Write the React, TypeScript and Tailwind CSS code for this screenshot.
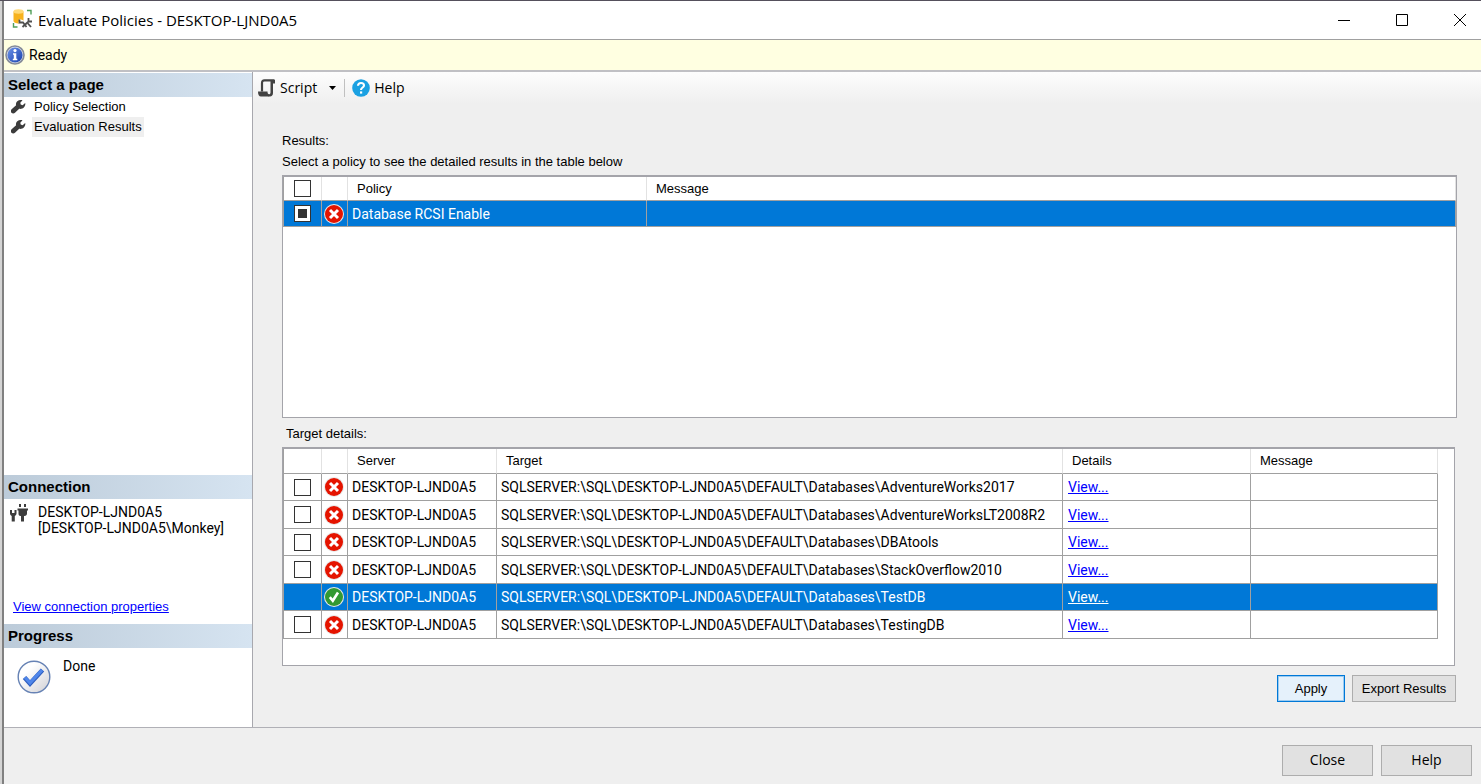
import { useState } from 'react'
import type { ReactNode } from 'react'

// ── Data ──────────────────────────────────────────────────────────────────────

interface TargetRow {
  database: string
  passed: boolean
}

const SERVER = 'DESKTOP-LJND0A5'

const targets: TargetRow[] = [
  { database: 'AdventureWorks2017', passed: false },
  { database: 'AdventureWorksLT2008R2', passed: false },
  { database: 'DBAtools', passed: false },
  { database: 'StackOverflow2010', passed: false },
  { database: 'TestDB', passed: true },
  { database: 'TestingDB', passed: false },
]

// ── Icons ─────────────────────────────────────────────────────────────────────

function AppIcon() {
  return (
    <svg width="22" height="22" viewBox="0 0 22 22" fill="none" aria-hidden="true">
      <path d="M15 1.500h4v4M1.500 14v4h4" stroke="#4f9e58" strokeWidth="1.400" />
      <path d="M1.500 2.500v9.500c0 1.600 2.400 2.500 5 2.500s5-.9 5-2.500V2.500z" fill="#f7b21d" />
      <ellipse cx="6.500" cy="2.500" rx="5" ry="2.200" fill="#ffd976" />
      <path d="M7 12l3 1 6 6M9.500 18.500l8-7.500" stroke="#fff" strokeWidth="4" />
      <path d="M7.500 10.500v3h3.500l3.500 4.500" stroke="#505050" strokeWidth="1.800" />
      <path d="M10.500 18l6-5.500h3.500M16.500 12.500V9" stroke="#505050" strokeWidth="1.800" />
      <path d="M15.500 14l3.500 4" stroke="#505050" strokeWidth="1.800" />
    </svg>
  )
}

function InfoIcon() {
  return (
    <svg width="20" height="20" viewBox="0 0 20 20" aria-hidden="true">
      <defs>
        <linearGradient id="info" x1="0" y1="0" x2="1" y2="1">
          <stop offset="0" stopColor="#6f95e8" />
          <stop offset="1" stopColor="#173fae" />
        </linearGradient>
      </defs>
      <circle cx="10" cy="10" r="9" fill="#dfe3ea" stroke="#858b99" strokeWidth="1.600" />
      <circle cx="10" cy="10" r="7.600" fill="url(#info)" />
      <circle cx="10" cy="5.600" r="1.600" fill="#fff" />
      <path d="M8 8.300h3.300v5.500h1v1.400H7.800v-1.400h1V9.700H8z" fill="#fff" />
    </svg>
  )
}

function WrenchIcon() {
  return (
    <svg width="15" height="14" viewBox="0 0 15 14" aria-hidden="true">
      <path
        d="M14.200 3L11.600 5.300 9.700 4.600 9.300 2.800 11.500.3C9.600-.4 7.500 0 6 1.400 5 2.600 4.700 4 5.100 5.300L.6 9.200c-1 .9-1 2.500-.1 3.600s2.600 1 3.500 0L8.200 8.800c1.600.4 3.300 0 4.600-1.300 1.200-1.200 1.800-2.900 1.400-4.500z"
        fill="#3c3c3c"
      />
    </svg>
  )
}

function ScriptIcon() {
  return (
    <svg width="18" height="18" viewBox="0 0 18 18" fill="none" aria-hidden="true">
      <path d="M4 12.500V4C4 2.300 4.800 1.300 6.500 1.300h10" stroke="#424242" strokeWidth="2.200" />
      <path d="M12.500 1h4.500v3.500h-2V14c0 2-1.200 3.500-3 3.500h-1.500v-2c1.300 0 2-.7 2-2z" fill="#424242" />
      <path d="M0 12.500h9.500c0 1.700.5 2.700 1.500 2.700v2.300H3C1 17.500 0 16 0 12.500z" fill="#424242" />
    </svg>
  )
}

function HelpIcon() {
  return (
    <svg width="18" height="18" viewBox="0 0 18 18" fill="none" aria-hidden="true">
      <circle cx="9" cy="9" r="8.800" fill="#1ba1e2" />
      <path d="M6 6.800C6 5 7.200 4 9 4s3 1 3 2.500C12 8.500 9 8.500 9 11" stroke="#fff" strokeWidth="2.100" />
      <rect x="8" y="12.400" width="2.200" height="2.200" fill="#fff" />
    </svg>
  )
}

function PlugIcon() {
  return (
    <svg width="18" height="18" viewBox="0 0 18 18" aria-hidden="true">
      <path
        d="M0 6h2v3h2.500V6h2v3.500c0 1.300-.8 2-1.700 2.500v5.500H1.700V12C.8 11.500 0 10.800 0 9.500z"
        fill="#3c3c3c"
      />
      <path d="M9 0h2v3H9zM14 0h2v3h-2zM7.500 4.500H18v2h-1v3c0 1.500-1 2.500-2.500 2.500H14v5.500h-3V12h-.5C9 12 8.500 11 8.500 9.500v-3h-1z" fill="#3c3c3c" />
    </svg>
  )
}

function DoneIcon() {
  return (
    <svg width="34" height="34" viewBox="0 0 34 34" fill="none" aria-hidden="true">
      <defs>
        <linearGradient id="done" x1="0" y1="0" x2="1" y2="1">
          <stop offset=".3" stopColor="#fff" />
          <stop offset="1" stopColor="#cfcfd4" />
        </linearGradient>
      </defs>
      <circle cx="17" cy="17" r="15.800" fill="url(#done)" stroke="#6682b4" strokeWidth="1.400" />
      <path d="M7.500 17.500l5.500 6L25.500 10" stroke="#2f5fc0" strokeWidth="4.600" />
      <path d="M8 17.500l5 5.300L25 10" stroke="#4f86ea" strokeWidth="3.200" />
    </svg>
  )
}

function StatusIcon({ passed }: { passed: boolean }) {
  return (
    <svg
      className="block"
      width="20"
      height="20"
      viewBox="0 0 20 20"
      fill="none"
      role="img"
      aria-label={passed ? 'Passed' : 'Failed'}
    >
      <circle cx="10" cy="10" r="10" fill="#e8e8e8" />
      <circle cx="10" cy="10" r="9" fill={passed ? '#339933' : '#e51400'} />
      {passed ? (
        <path d="M5.800 10.200l3 3.600 5.200-8.300" stroke="#fff" strokeWidth="2.600" />
      ) : (
        <path d="M6 6l8 8M14 6l-8 8" stroke="#fff" strokeWidth="3" />
      )}
    </svg>
  )
}

// ── Shared pieces ─────────────────────────────────────────────────────────────

function PanelHeader({ children }: { children: ReactNode }) {
  return (
    <h2 className="flex h-6 shrink-0 items-center bg-linear-to-r from-[#bccbd9] to-[#d6e4f1] px-1 text-[15px] font-bold">
      {children}
    </h2>
  )
}

function Tick({ label, filled = false }: { label: string; filled?: boolean }) {
  return (
    <input
      type="checkbox"
      aria-label={label}
      defaultChecked={filled}
      className="mx-auto block size-[17px] appearance-none border border-[#333] bg-white checked:bg-[#333] checked:shadow-[inset_0_0_0_3px_white]"
    />
  )
}

const headCell = 'border-r border-b border-r-[#e2e2e2] border-b-[#a0a0a0] px-[9px] text-left font-normal'
const cell = "border-r border-b border-[#a0a0a0] px-1 font-['Roboto',sans-serif] text-sm whitespace-nowrap"
const iconCell = 'border-r border-b border-[#a0a0a0] pl-[2px]'

// ── Window ────────────────────────────────────────────────────────────────────

export default function App() {
  const [page, setPage] = useState('Evaluation Results')

  return (
    <div className="flex min-h-screen border-t border-t-[#55505c] bg-[#efefef] font-['Liberation_Sans',sans-serif] text-[13px] text-black">
      {/* Window edge */}
      <div className="w-1 shrink-0 border-r-2 border-[#808080] bg-[#d4d4d4]" />

      <div className="flex min-w-0 grow flex-col">
        {/* Title bar */}
        <header className="flex h-[39px] shrink-0 items-center border-b border-[#a0a0a0] bg-white pl-2 font-['Open_Sans',sans-serif]">
          <AppIcon />
          <h1 className="ml-1 grow text-[15px]">Evaluate Policies - {SERVER}</h1>
          <div className="-mr-2 flex h-full">
            <button type="button" aria-label="Minimize" className="flex w-[58px] items-center justify-center">
              <svg width="12" height="12" stroke="#000"><path d="M0 6.500h12" /></svg>
            </button>
            <button type="button" aria-label="Maximize" className="flex w-[58px] items-center justify-center">
              <svg width="12" height="12" fill="none" stroke="#000"><path d="M.5.500h11v11H.5z" /></svg>
            </button>
            <button type="button" aria-label="Close window" className="flex w-[58px] items-center justify-center">
              <svg width="12" height="12" stroke="#000"><path d="M0 0l12 12M12 0L0 12" /></svg>
            </button>
          </div>
        </header>

        {/* Status strip */}
        <div
          className="flex h-[32px] shrink-0 items-center gap-1 border-b-2 border-[#c0c0c4] bg-[#ffffe1] pl-px font-['Roboto',sans-serif] text-sm"
          role="status"
        >
          <InfoIcon />
          Ready
        </div>

        <div className="flex grow border-b border-[#b0b0b6]">
          {/* Sidebar */}
          <aside className="flex w-[249px] shrink-0 flex-col border-r border-[#a8a8ae] bg-white pt-px">
            <PanelHeader>Select a page</PanelHeader>
            <nav className="grow">
              {['Policy Selection', 'Evaluation Results'].map((name) => (
                <button
                  key={name}
                  type="button"
                  onClick={() => setPage(name)}
                  className="flex h-5 items-center gap-1.5 pl-[7px]"
                >
                  <WrenchIcon />
                  <span className={page === name ? 'bg-[#efefef] px-0.5 leading-5' : 'px-0.5 leading-5'}>{name}</span>
                </button>
              ))}
            </nav>

            <PanelHeader>Connection</PanelHeader>
            <div className="flex h-[125px] flex-col justify-between pt-[5px] pb-2">
              <div className="flex gap-2.5 pl-1.5 font-['Roboto',sans-serif] text-sm leading-4">
                <PlugIcon />
                <p>
                  {SERVER}
                  <br />
                  [{SERVER}\Monkey]
                </p>
              </div>
              <a href="#connection" className="ml-[9px] self-start text-[#0000ff] underline">
                View connection properties
              </a>
            </div>

            <PanelHeader>Progress</PanelHeader>
            <div className="flex h-[79px] gap-3 pt-2 pl-[13px]">
              <div className="pt-1">
                <DoneIcon />
              </div>
              <p className="font-['Roboto',sans-serif] text-sm">Done</p>
            </div>
          </aside>

          {/* Page content */}
          <main className="flex min-w-0 grow flex-col">
            <div className="flex h-8 shrink-0 items-center bg-linear-to-b from-[#fdfdfd] to-[#efefef] pl-[5px] font-['Open_Sans',sans-serif] text-sm">
              <button type="button" className="flex items-center gap-1">
                <ScriptIcon />
                Script
                <svg className="ml-2" width="8" height="4" aria-hidden="true"><path d="M0 0h7L3.500 4z" /></svg>
              </button>
              <span className="mx-[7px] h-[18px] w-px bg-[#c0c0c0]" />
              <button type="button" className="flex items-center gap-1">
                <HelpIcon />
                Help
              </button>
            </div>

            <div className="flex grow flex-col pt-[26px] pr-6 pl-[29px]">
              <h3 className="leading-[21px]">Results:</h3>
              <p className="leading-[21px]">Select a policy to see the detailed results in the table below</p>
              <div className="mt-[3px] min-h-[243px] grow border border-t-2 border-[#a4a4aa] bg-white">
                <table className="w-full table-fixed border-separate border-spacing-0 border-l border-[#a0a0a0]">
                  <colgroup>
                    <col className="w-[38px]" />
                    <col className="w-[26px]" />
                    <col className="w-[299px]" />
                    <col />
                  </colgroup>
                  <thead>
                    <tr className="h-6">
                      <th className="border-r border-b border-r-[#e2e2e2] border-b-[#a0a0a0]">
                        <Tick label="Select all policies" />
                      </th>
                      <th className={headCell} />
                      <th className={headCell}>Policy</th>
                      <th className={headCell}>Message</th>
                    </tr>
                  </thead>
                  <tbody>
                    <tr className="h-[26px] bg-[#0078d7] text-white">
                      <td className="border-r border-b border-[#a0a0a0]">
                        <Tick label="Database RCSI Enable" filled />
                      </td>
                      <td className={iconCell}>
                        <StatusIcon passed={false} />
                      </td>
                      <td className={cell}>Database RCSI Enable</td>
                      <td className={cell} />
                    </tr>
                  </tbody>
                </table>
              </div>

              <h3 className="mt-1.5 ml-1 leading-5">Target details:</h3>
              <div className="mt-[3px] mr-0.5 h-[219px] border border-t-2 border-[#a4a4aa] bg-white pr-4">
                <table className="w-full table-fixed border-separate border-spacing-0 border-l border-[#a0a0a0]">
                  <colgroup>
                    <col className="w-[38px]" />
                    <col className="w-[26px]" />
                    <col className="w-[149px]" />
                    <col />
                    <col className="w-[188px]" />
                    <col className="w-[187px]" />
                  </colgroup>
                  <thead>
                    <tr className="h-[25px]">
                      <th className={headCell} />
                      <th className={headCell} />
                      <th className={headCell}>Server</th>
                      <th className={headCell}>Target</th>
                      <th className={headCell}>Details</th>
                      <th className={headCell}>Message</th>
                    </tr>
                  </thead>
                  <tbody>
                    {targets.map(({ database, passed }) => (
                      <tr
                        key={database}
                        className={
                          passed ? 'h-[27px] bg-[#0078d7] text-white even:h-[28px]' : 'h-[27px] even:h-[28px]'
                        }
                      >
                        <td className="border-r border-b border-[#a0a0a0]">
                          {!passed && <Tick label={database} />}
                        </td>
                        <td className={iconCell}>
                          <StatusIcon passed={passed} />
                        </td>
                        <td className={cell}>{SERVER}</td>
                        <td className={cell}>
                          SQLSERVER:\SQL\{SERVER}\DEFAULT\Databases\{database}
                        </td>
                        <td className="border-r border-b border-[#a0a0a0] px-[5px] font-['Roboto',sans-serif] text-sm">
                          <a href={`#${database}`} className={passed ? 'underline' : 'text-[#0000ff] underline'}>
                            View...
                          </a>
                        </td>
                        <td className={cell} />
                      </tr>
                    ))}
                  </tbody>
                </table>
              </div>

              <div className="mt-[9px] mb-[25px] flex justify-end gap-[7px] pr-px">
                <button type="button" className="h-[27px] w-[68px] border border-[#0078d7] bg-[#e5f1fb] shadow-[inset_0_0_0_1px_#9ccbf0]">
                  Apply
                </button>
                <button type="button" className="h-[27px] w-[104px] border border-[#adadad] bg-[#e1e1e1]">
                  Export Results
                </button>
              </div>
            </div>
          </main>
        </div>

        {/* Dialog buttons */}
        <footer className="flex h-14 shrink-0 items-center justify-end gap-2 pt-2 pr-[9px] font-['Open_Sans',sans-serif] text-sm">
          <button type="button" className="h-[31px] w-[91px] border border-[#adadad] bg-[#e1e1e1]">
            Close
          </button>
          <button type="button" className="h-[31px] w-[91px] border border-[#adadad] bg-[#e1e1e1]">
            Help
          </button>
        </footer>
      </div>
    </div>
  )
}
